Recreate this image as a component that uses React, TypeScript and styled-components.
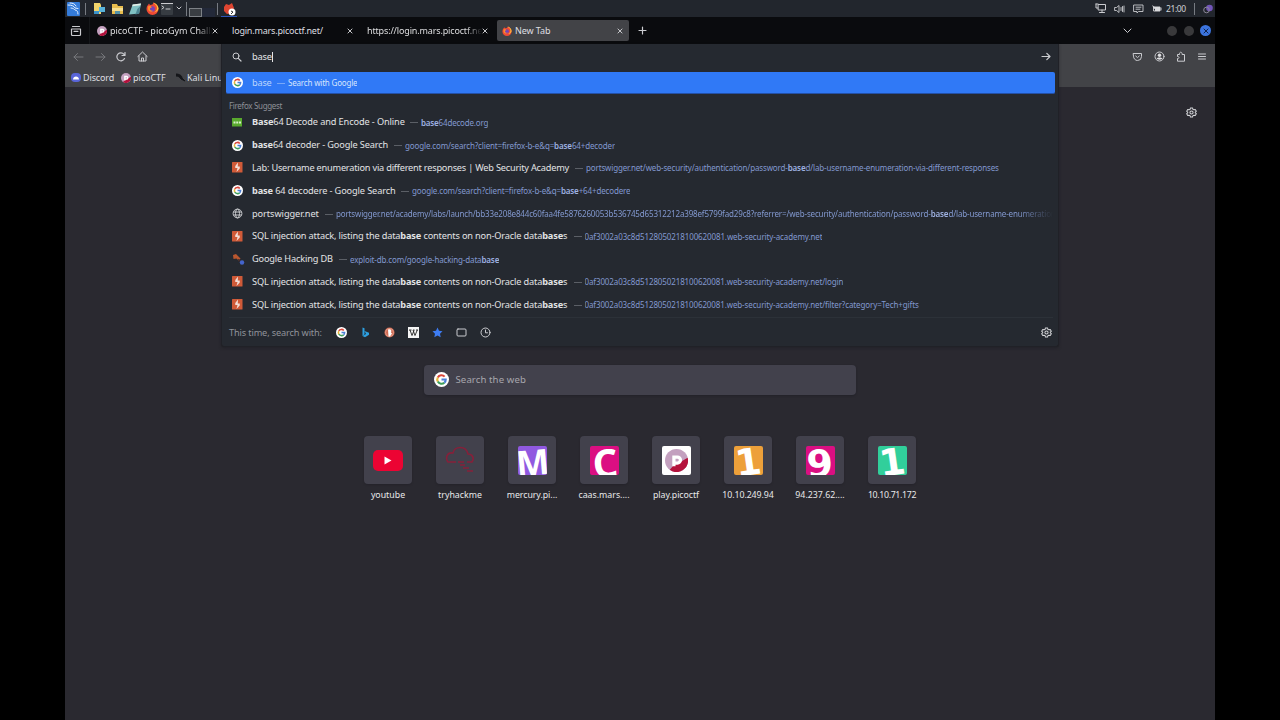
import React from "react";
import styled, { createGlobalStyle } from "styled-components";

const Global = createGlobalStyle`
  * { box-sizing: border-box; }
  body { margin: 0; background: #000; overflow: hidden; font-family: "Noto Sans", "Open Sans", sans-serif; }
  svg { display: block; flex: none; }
`;

const Stage = styled.div`
  width: 1280px;
  height: 720px;
  padding: 0 65px;
  background: #000;
`;
const Desktop = styled.div`
  position: relative;
  display: flex;
  flex-direction: column;
  width: 1150px;
  height: 720px;
  overflow: hidden;
  background: #2a2930;
`;
const Panel = styled.header`
  display: flex;
  justify-content: space-between;
  align-items: center;
  height: 17px;
  flex: none;
  background: #22262d;
`;
const Group = styled.div<{ $gap?: number; $pad?: string }>`
  display: flex;
  align-items: center;
  gap: ${(p) => p.$gap ?? 0}px;
  padding: ${(p) => p.$pad ?? "0"};
`;
const Divider = styled.i<{ $h?: number; $m?: string }>`
  width: 1px;
  height: ${(p) => p.$h ?? 12}px;
  margin: ${(p) => p.$m ?? "0"};
  background: #777b82;
`;
const MenuArrow = styled.svg`
  margin: 0 4px 0 3px;
`;
const Clock = styled.span`
  width: 20px;
  margin-right: 8px;
  color: #d0d2d5;
  font-size: 8.5px;
  line-height: 16px;
  letter-spacing: -0.4px;
  white-space: nowrap;
`;
const Workspace = styled.i<{ $active?: boolean }>`
  width: 13px;
  height: 9px;
  margin-top: 8px;
  border: 1px solid ${(p) => (p.$active ? "#7d8186" : "transparent")};
  background: ${(p) => (p.$active ? "#3a3e43" : "#232939")};
`;
const TaskButton = styled.div`
  display: flex;
  justify-content: center;
  width: 16px;
  height: 16px;
  padding-top: 2px;
  border-bottom: 1px solid #2d55b8;
`;

const TabBar = styled.nav`
  display: flex;
  align-items: center;
  height: 27px;
  flex: none;
  background: #0a0b0e;
`;
const TabViewButton = styled.div`
  display: flex;
  align-items: center;
  width: 25px;
  height: 27px;
  padding-left: 5px;
  border-right: 1px solid #15171a;
  flex: none;
`;
const Tab = styled.div<{ $active?: boolean }>`
  display: flex;
  align-items: center;
  width: 132px;
  height: 21px;
  margin-right: 3px;
  padding: 0 6px 0 5px;
  flex: none;
  border-radius: 2px;
  background: ${(p) => (p.$active ? "#424347" : "transparent")};
`;
const TabLabel = styled.span<{ $ls?: number; $fade?: boolean; $icon?: boolean }>`
  flex: 1;
  min-width: 0;
  margin-left: ${(p) => (p.$icon ? 3 : 0)}px;
  overflow: hidden;
  color: #dfdfe1;
  font-size: 9px;
  line-height: 16px;
  letter-spacing: ${(p) => p.$ls ?? 0}px;
  white-space: nowrap;
  mask-image: ${(p) => (p.$fade ? "linear-gradient(90deg, #000 86%, transparent 100%)" : "none")};
`;
const WindowControls = styled.div`
  display: flex;
  align-items: center;
  gap: 6.5px;
  margin-left: 35px;
`;
const WinDot = styled.i<{ $close?: boolean }>`
  display: flex;
  align-items: center;
  justify-content: center;
  width: ${(p) => (p.$close ? 11 : 10)}px;
  height: ${(p) => (p.$close ? 11 : 10)}px;
  border-radius: 50%;
  background: ${(p) => (p.$close ? "#3c74de" : "#39393b")};
`;

const Toolbar = styled.div`
  display: flex;
  justify-content: space-between;
  height: 43px;
  flex: none;
  background: #424347;
`;
const ToolbarLeft = styled.div`
  display: flex;
  flex-direction: column;
`;
const NavRow = styled.div`
  display: flex;
  align-items: center;
  gap: 10.7px;
  height: 25px;
  padding-left: 8px;
`;
const Bookmarks = styled.div`
  display: flex;
  align-items: center;
  height: 17px;
  padding-left: 6px;
`;
const Bookmark = styled.span<{ $w: number; $ls?: number }>`
  display: flex;
  align-items: center;
  gap: 2px;
  width: ${(p) => p.$w}px;
  color: #dedfe1;
  font-size: 9px;
  letter-spacing: ${(p) => p.$ls ?? 0}px;
  line-height: 16px;
  white-space: nowrap;
`;

const UrlPopup = styled.section`
  position: absolute;
  left: 156px;
  top: 44px;
  width: 838px;
  height: 303px;
  padding: 0 3px 0 4px;
  border: 1px solid #202127;
  border-top: 0;
  border-radius: 0 0 3px 3px;
  background: #252930;
  box-shadow: 0 1px 3px #1b1b2088;
`;
const UrlInput = styled.div`
  display: flex;
  align-items: center;
  height: 28px;
  padding: 0 4px 3px 6px;
`;
const Typed = styled.span`
  flex: 1;
  display: flex;
  align-items: center;
  margin-left: 10px;
  color: #e4e5e7;
  font-size: 9.3px;
  letter-spacing: -0.2px;
  line-height: 14px;
`;
const Caret = styled.i`
  width: 1px;
  height: 10px;
  background: #e4e5e7;
`;
const Selected = styled.div`
  display: flex;
  align-items: center;
  height: 22px;
  padding-left: 6px;
  border-radius: 2px;
  border-bottom: 1px solid #2450a5;
  background: #3079f6;
`;
const SuggestHeading = styled.div`
  height: 17px;
  padding: 5px 0 0 3px;
  color: #8d9096;
  font-size: 8px;
  line-height: 13px;
  letter-spacing: -0.33px;
`;
const Results = styled.div`
  display: flex;
  flex-direction: column;
  padding: 0 2px 0 6px;
`;
const Row = styled.div`
  display: flex;
  align-items: center;
  height: 22.8px;
  min-width: 0;
`;
const IconSlot = styled.span`
  display: flex;
  width: 11px;
  flex: none;
`;
const Title = styled.span<{ $w: number; $ls?: number; $dim?: boolean }>`
  width: ${(p) => p.$w}px;
  margin-left: 9px;
  flex: none;
  color: ${(p) => (p.$dim ? "#bdd6fc" : "#e2e3e5")};
  font-size: 9.2px;
  letter-spacing: ${(p) => p.$ls ?? 0}px;
  line-height: 16px;
  white-space: nowrap;
  b { font-weight: 700; }
`;
const Dash = styled.i<{ $bright?: boolean }>`
  width: 8px;
  height: 1px;
  margin: 1px 3px 0 6px;
  flex: none;
  background: ${(p) => (p.$bright ? "#79a8f7" : "#5b5f66")};
`;
const Url = styled.span<{ $ls?: number; $fade?: boolean; $bright?: boolean }>`
  min-width: 0;
  overflow: hidden;
  color: ${(p) => (p.$bright ? "#d5e4fd" : "#8298cf")};
  font-size: 8px;
  letter-spacing: ${(p) => p.$ls ?? 0}px;
  line-height: 15px;
  white-space: nowrap;
  mask-image: ${(p) => (p.$fade ? "linear-gradient(90deg, #000 95%, transparent 100%)" : "none")};
  b { font-weight: 600; color: #9fb2e2; }
`;
const OneOffs = styled.footer`
  display: flex;
  align-items: center;
  height: 29px;
  margin: 1px 2px 0 3px;
  padding: 1px 1px 0 0;
  border-top: 1px solid #2c3138;
  color: #90939a;
  font-size: 9.2px;
  letter-spacing: -0.14px;
  > span { width: 107px; white-space: nowrap; }
`;
const Engines = styled.div`
  display: flex;
  flex: 1;
  gap: 13px;
`;

const NewTab = styled.main`
  position: relative;
  display: flex;
  flex-direction: column;
  align-items: center;
  flex: 1;
  padding-top: 278px;
`;
const Gear = styled.div`
  position: absolute;
  right: 18px;
  top: 20px;
`;
const SearchBox = styled.div`
  display: flex;
  align-items: center;
  gap: 7px;
  width: 432px;
  height: 30px;
  padding: 0 0 1px 9.5px;
  border-radius: 4px;
  background: #42414c;
  box-shadow: 0 1px 2px #1d1c2288;
  color: #a7a6ad;
  font-size: 9.6px;
  letter-spacing: 0.1px;
`;
const TopSites = styled.div`
  display: flex;
  gap: 14px;
  margin-top: 41px;
`;
const Site = styled.div`
  display: flex;
  flex-direction: column;
  align-items: center;
  width: 58px;
`;
const SiteTile = styled.div`
  display: flex;
  align-items: center;
  justify-content: center;
  width: 48px;
  height: 48px;
  border-radius: 4px;
  background: #42414c;
  box-shadow: 0 1px 2px #1d1c2266;
`;
const Badge = styled.div<{ $bg: string }>`
  display: flex;
  align-items: center;
  justify-content: center;
  width: 29px;
  height: 29px;
  overflow: hidden;
  border-radius: 2px;
  background: ${(p) => p.$bg};
`;
const Glyph = styled.span<{ $x?: number; $y?: number; $size?: number; $rot?: number; $family?: string }>`
  color: #fff;
  font-family: ${(p) => p.$family ?? '"Noto Sans"'}, sans-serif;
  font-size: ${(p) => p.$size ?? 34}px;
  font-weight: 700;
  line-height: 29px;
  transform: translate(${(p) => p.$x ?? 0}px, ${(p) => p.$y ?? 0}px) rotate(${(p) => p.$rot ?? 0}deg);
`;
const SiteName = styled.span<{ $ls?: number }>`
  margin-top: 4px;
  color: #e8e8ea;
  font-size: 8.8px;
  letter-spacing: ${(p) => p.$ls ?? 0}px;
  line-height: 14px;
  white-space: nowrap;
`;

const line = { fill: "none", stroke: "#cbccd0", strokeWidth: 1, strokeLinecap: "round", strokeLinejoin: "round" } as const;

const Google = ({ s = 11 }: { s?: number }) => (
  <svg width={s} height={s} viewBox="0 0 22 22">
    <circle cx="11" cy="11" r="11" fill="#fff" />
    <g fill="none" strokeWidth="3.1">
      <path d="M15.6 6.8A6.2 6.2 0 0 0 5.6 8" stroke="#d9473c" />
      <path d="M5.6 8a6.2 6.2 0 0 0 0 6" stroke="#e5b53a" />
      <path d="M5.6 14a6.2 6.2 0 0 0 9.6 1.7" stroke="#3f9f5c" />
      <path d="M15.2 15.7a6.2 6.2 0 0 0 2-4.7H11" stroke="#4a7fd6" />
    </g>
  </svg>
);
const Pico = ({ s = 10 }: { s?: number }) => (
  <svg width={s} height={s} viewBox="0 0 24 24">
    <circle cx="12" cy="12" r="12" fill="#c3a0bf" />
    <path d="M23.600 9A12 12 0 0 1 5 21.700L10 16l7-3z" fill="#b4123c" />
    <path d="M9.300 18V8.500h3.700a3 3 0 0 1 0 6.200H9.300" fill="none" stroke="#fff" strokeWidth="3.400" />
  </svg>
);
const Firefox = ({ s = 13 }: { s?: number }) => (
  <svg width={s} height={s} viewBox="0 0 26 26">
    <path d="M4 6l2-3 2 3 5-1 2-4c5 2 10 7 10 13a12 12 0 0 1-24 0c0-3 1-6 3-8z" fill="#f04a35" />
    <path d="M15 1c1 3 7 5 7 11 0 5-4 9-9 9 7 0 11-3 12-8 0-6-5-10-10-12z" fill="#ffc13b" />
    <circle cx="12.500" cy="14" r="5.400" fill="#7443b8" />
    <path d="M4 9c4-2 7 0 8 2-3 0-4 1-4 3 0 3 4 4 7 3-3 4-10 3-11-3z" fill="#ff8b2d" />
  </svg>
);
const Close = ({ c = "#c5c6c9" }: { c?: string }) => (
  <svg width="6" height="6" viewBox="0 0 6 6"><path d="M.7.7l4.600 4.600M5.300.7L.7 5.300" stroke={c} strokeWidth="1" /></svg>
);
const Burp = () => (
  <svg width="11" height="11" viewBox="0 0 22 22">
    <rect width="21" height="21" rx="1" fill="#cf5a38" />
    <path d="M12 1L6.500 8v4H11L9 20l6.500-7V9h-4z" fill="#f3ddd5" />
  </svg>
);
const Globe = () => (
  <svg width="11" height="11" viewBox="0 0 22 22" fill="none" stroke="#d4d5d8" strokeWidth="1.800">
    <circle cx="11" cy="11" r="8.800" /><ellipse cx="11" cy="11" rx="4" ry="8.800" /><path d="M3 8h16M3 14h16" />
  </svg>
);
const Base64 = () => (
  <svg width="11" height="11" viewBox="0 0 22 22">
    <rect y="2" width="20" height="17" fill="#59a92e" />
    <path d="M3 9h4v4H3zM8.500 9h4v4h-4zM14 9h4v4h-4z" fill="#d8f1c9" />
  </svg>
);
const Exploit = () => (
  <svg width="13" height="12" viewBox="0 0 26 24">
    <path d="M2 4l6-2 9 9-3 5-5-5-6 1z" fill="#b9572f" /><path d="M11 12l5 1 2 3-4 2z" fill="#3d2c2c" />
    <circle cx="20" cy="19" r="4.500" fill="#4464cc" />
  </svg>
);
const GearIcon = () => (
  <svg width="11" height="11" viewBox="0 0 24 24" fill="none" stroke="#d4d5d8" strokeWidth="2.200" strokeLinejoin="round">
    <path d="M9.700 2h4.600l.7 3 2.200 1.200 3-.9 2.300 4-2.300 2.100v1.200l2.300 2.100-2.300 4-3-.9-2.200 1.200-.7 3H9.700L9 19l-2.200-1.200-3 .9-2.300-4 2.300-2.100v-1.200L1.500 9.300l2.300-4 3 .9L9 5z" />
    <circle cx="12" cy="12" r="3.500" />
  </svg>
);

const icons = { base64: <Base64 />, google: <Google />, burp: <Burp />, globe: <Globe />, exploit: <Exploit /> };
type Result = { icon: keyof typeof icons; title: string; w: number; ls: number; url: string; uls: number; fade?: boolean };
const sql = "SQL injection attack, listing the data*base* contents on non-Oracle data*base*s";
const host = "0af3002a03c8d5128050218100620081.web-security-academy.net";
const results: Result[] = [
  { icon: "base64", title: "*Base*64 Decode and Encode - Online", w: 152, ls: -0.11, url: "*base*64decode.org", uls: -0.18 },
  { icon: "google", title: "*base*64 decoder - Google Search", w: 136, ls: -0.13, url: "google.com/search?client=firefox-b-e&q=*base*64+decoder", uls: -0.14 },
  { icon: "burp", title: "Lab: Username enumeration via different responses | Web Security Academy", w: 317, ls: -0.21, url: "portswigger.net/web-security/authentication/password-*base*d/lab-username-enumeration-via-different-responses", uls: -0.143 },
  { icon: "google", title: "*base* 64 decodere - Google Search", w: 143, ls: -0.12, url: "google.com/search?client=firefox-b-e&q=*base*+64+decodere", uls: -0.145 },
  { icon: "globe", title: "portswigger.net", w: 67, ls: -0.06, url: "portswigger.net/academy/labs/launch/bb33e208e844c60faa4fe5876260053b536745d65312212a398ef5799fad29c8?referrer=/web-security/authentication/password-*base*d/lab-username-enumeration-via", uls: -0.157, fade: true },
  { icon: "burp", title: sql, w: 315.5, ls: -0.155, url: host, uls: -0.115 },
  { icon: "exploit", title: "Google Hacking DB", w: 81, ls: -0.15, url: "exploit-db.com/google-hacking-data*base*", uls: -0.15 },
  { icon: "burp", title: sql, w: 315.5, ls: -0.155, url: host + "/login", uls: -0.12 },
  { icon: "burp", title: sql, w: 315.5, ls: -0.155, url: host + "/filter?category=Tech+gifts", uls: -0.12 },
];
const emphasise = (text: string) => text.split("*").map((part, i) => (i % 2 ? <b key={i}>{part}</b> : part));

export default function App() {
  return (
    <>
      <Global />
      <Stage>
        <Desktop>
          <Panel>
            <Group $pad="0 0 0 2px">
              <svg width="13" height="14" viewBox="0 0 13 14"><rect width="13" height="14" rx="1" fill="#347bd9" /><path d="M1 3c4 0 6 1 7 3l3 .5M3 1c3 0 5 1 6 3M4 6c2 0 3 1 4 2 2 0 3 2 3 4" {...line} stroke="#e6f1ff" /></svg>
              <Divider $m="0 7px 0 5px" />
              <Group $gap={5}>
                <svg width="13" height="12" viewBox="0 0 13 12"><path d="M1 0h6l1 2v9H1z" fill="#f1d36b" /><path d="M6 4h6v5H6z" fill="#58b3db" /><path d="M1 8h5v3H1z" fill="#3c93ca" /></svg>
                <svg width="13" height="12" viewBox="0 0 13 12"><path d="M1 1h5l1 2h5v8H1z" fill="#e8bd4e" /><path d="M1 5h11v3H1z" fill="#f6df91" /><path d="M4 8h5v3H4z" fill="#5392a9" /></svg>
                <svg width="12" height="12" viewBox="0 0 13 12"><path d="M4 1l9-1-2 11-11 1z" fill="#80c1c3" /><path d="M4 1l9-1-.5 2-9 1z" fill="#e2eee8" /><path d="M9 6l3-3-1 8-4 1z" fill="#4c8694" /></svg>
                <Firefox />
              </Group>
              <Group $pad="0 0 0 2px">
                <svg width="12" height="12" viewBox="0 0 12 12"><rect width="12" height="12" rx="1" fill="#373c42" /><path d="M1 3l2 1.500L1 6M5 6h4M0 .5h12" {...line} /></svg>
              </Group>
              <MenuArrow width="6" height="5" viewBox="0 0 6 5"><path d="M1 1l2 2 2-2" {...line} /></MenuArrow>
              <Divider $h={14} $m="0 2px 0 0" />
              <Workspace $active />
              <Workspace />
              <Divider $m="0 3px 0 2px" />
              <TaskButton>
                <svg width="13" height="13" viewBox="0 0 13 13"><path d="M1 4l2-3 3 1 3-2 2 5-2 5-5 1-3-3z" fill="#de4531" /><circle cx="9" cy="9" r="3.500" fill="#fff" /><path d="M8 8l2 1-2 2" stroke="#333" fill="none" /></svg>
              </TaskButton>
            </Group>
            <Group $pad="0 2px 0 0">
              <Group $gap={7.5}>
                <svg width="12" height="11" viewBox="0 0 12 11"><path d="M3.500 1.500h7v5.500h-7zM7 7v2.500M4.500 9.500h5M1 1v4h2M1 1h2" {...line} /></svg>
                <svg width="11" height="10" viewBox="0 0 11 10"><path d="M1 3.500h1.500L5 1.500v7L2.500 6.500H1zM7 3.500v3M8.500 2.500v5M10 2v6" {...line} strokeWidth=".9" /></svg>
                <svg width="11" height="10" viewBox="0 0 11 10"><path d="M1 1h9v6.500H5.500L4 9V7.500H1zM3 3.200h5M3 5.200h4" {...line} strokeWidth=".9" /></svg>
                <svg width="11" height="10" viewBox="0 0 11 10"><path d="M3 3h6v4H3zM10 4v2" {...line} /><path d="M4 3h5v4H4zM1 1l4 3-2 1z" fill="#d9dadc" /></svg>
              </Group>
              <Group $pad="0 0 0 4px"><Clock>21:00</Clock></Group>
              <Divider $m="0 8px 0 0" />
              <svg width="10" height="10" viewBox="0 0 10 10"><circle cx="6.500" cy="4" r="3.300" fill="#7255ba" /><circle cx="3.500" cy="6" r="2.800" fill="none" stroke="#8b8798" /></svg>
            </Group>
          </Panel>

          <TabBar>
            <TabViewButton>
              <svg width="12" height="12" viewBox="0 0 12 12"><path d="M2.500 1.500h7M1.500 4h9v5.500a1 1 0 0 1-1 1h-7a1 1 0 0 1-1-1zM4 6.300h4" {...line} strokeWidth="1.200" /></svg>
            </TabViewButton>
            <Group $pad="0 0 0 2px">
              <Tab><Pico /><TabLabel $icon $fade $ls={-0.02}>picoCTF - picoGym Challenges</TabLabel><Close /></Tab>
              <Tab><TabLabel $ls={-0.19}>login.mars.picoctf.net/</TabLabel><Close /></Tab>
              <Tab><TabLabel $fade $ls={-0.15}>https://login.mars.picoctf.net/</TabLabel><Close /></Tab>
              <Tab $active><Firefox s={10} /><TabLabel $icon $ls={-0.08}>New Tab</TabLabel><Close /></Tab>
            </Group>
            <Group $pad="0 0 0 6px"><svg width="9" height="9" viewBox="0 0 9 9"><path d="M4.500 1v7M1 4.500h7" {...line} strokeWidth="1.200" /></svg></Group>
            <Group $pad="0 0 0 476px"><svg width="9" height="6" viewBox="0 0 9 6"><path d="M1 1l3.500 3.500L8 1" {...line} /></svg></Group>
            <WindowControls><WinDot /><WinDot /><WinDot $close><Close c="#10244c" /></WinDot></WindowControls>
          </TabBar>

          <Toolbar>
            <ToolbarLeft>
              <NavRow>
                <svg width="11" height="10" viewBox="0 0 11 10"><path d="M10 5H1M4.500 1.500L1 5l3.500 3.500" {...line} stroke="#77787c" /></svg>
                <svg width="11" height="10" viewBox="0 0 11 10"><path d="M1 5h9M6.500 1.500L10 5 6.500 8.500" {...line} stroke="#77787c" /></svg>
                <svg width="10" height="10" viewBox="0 0 10 10"><path d="M8.500 6.500A4 4 0 1 1 8 2.300M9 .5v3H6" {...line} strokeWidth="1.200" /></svg>
                <svg width="11" height="11" viewBox="0 0 11 11"><path d="M.8 5.500L5.500 1l4.700 4.500M2 5v5h7V5M4.500 10V7h2v3" {...line} /></svg>
              </NavRow>
              <Bookmarks>
                <Bookmark $w={50} $ls={-0.12}><svg width="10" height="9" viewBox="0 0 10 9"><rect width="10" height="9" rx="4" fill="#5965d8" /><path d="M2 6.500c0-4 6-4 6 0" fill="#fff" /></svg>Discord</Bookmark>
                <Bookmark $w={55} $ls={-0.05}><Pico />picoCTF</Bookmark>
                <Bookmark $w={60}><svg width="9" height="9" viewBox="0 0 9 9"><path d="M0 1c4 0 6 2 6 4l3 3-4-2C4 4 2 3 0 3z" fill="#15161a" stroke="#15161a" /></svg>Kali Linux</Bookmark>
              </Bookmarks>
            </ToolbarLeft>
            <Group $gap={11} $pad="0 8px 18px 0">
              <svg width="11" height="10" viewBox="0 0 11 10"><path d="M1.500 1.500h8v3a4 4 0 0 1-8 0zM3.700 4l1.800 1.600L7.300 4" {...line} /></svg>
              <svg width="11" height="11" viewBox="0 0 11 11"><circle cx="5.500" cy="5.500" r="4.500" {...line} /><circle cx="5.500" cy="4.200" r="1.700" fill="#e0e0e2" /><path d="M2.500 7.500c1-1.500 5-1.500 6 0-1 1.500-5 1.500-6 0z" fill="#e0e0e2" /></svg>
              <svg width="10" height="11" viewBox="0 0 10 11"><path d="M1.500 9.800V7.500c2 .3 2-2.300 0-2V3.500h2c-.5-3 3-3 2.600 0h2.400v6.300z" {...line} /></svg>
              <svg width="10" height="9" viewBox="0 0 10 9"><path d="M1.500 2h7M1.500 4.500h7M1.500 7h7" {...line} /></svg>
            </Group>
          </Toolbar>

          <NewTab>
            <Gear><GearIcon /></Gear>
            <SearchBox><Google s={15} />Search the web</SearchBox>
            <TopSites>
              <Site><SiteTile><svg width="30" height="21" viewBox="0 0 30 21"><rect width="30" height="21" rx="5" fill="#ec0433" /><path d="M11.500 6.500v8l7-4z" fill="#fff" /></svg></SiteTile><SiteName>youtube</SiteName></Site>
              <Site><SiteTile><svg width="32" height="30" viewBox="0 0 32 30"><path d="M23 17h5c3-4 0-8-4-8-2-9-14-8-15-1-6-1-8 5-5 9h8M16 20h5M19 23h6M23 26h6M14 17h6" fill="none" stroke="#86203a" strokeWidth="1.500" /></svg></SiteTile><SiteName>tryhackme</SiteName></Site>
              <Site><SiteTile><Badge $bg="#9059e0"><Glyph $size={35} $y={1} $rot={-5}>M</Glyph></Badge></SiteTile><SiteName $ls={-0.05}>mercury.pi...</SiteName></Site>
              <Site><SiteTile><Badge $bg="#db0f82"><Glyph $size={39} $x={1.5} $y={1.5} $rot={-5}>C</Glyph></Badge></SiteTile><SiteName>caas.mars....</SiteName></Site>
              <Site><SiteTile><Badge $bg="#fff"><Pico s={23} /></Badge></SiteTile><SiteName $ls={-0.05}>play.picoctf</SiteName></Site>
              <Site><SiteTile><Badge $bg="#eda03a"><Glyph $family='"DejaVu Sans"' $size={37} $x={0.5} $y={2} $rot={-8}>1</Glyph></Badge></SiteTile><SiteName $ls={-0.08}>10.10.249.94</SiteName></Site>
              <Site><SiteTile><Badge $bg="#db0f82"><Glyph $family='"DejaVu Sans"' $size={38} $x={-0.5} $y={4} $rot={-3}>9</Glyph></Badge></SiteTile><SiteName>94.237.62....</SiteName></Site>
              <Site><SiteTile><Badge $bg="#31cf9b"><Glyph $family='"DejaVu Sans"' $size={37} $x={0.5} $y={2} $rot={-8}>1</Glyph></Badge></SiteTile><SiteName $ls={-0.35}>10.10.71.172</SiteName></Site>
            </TopSites>
          </NewTab>

          <UrlPopup>
            <UrlInput>
              <svg width="10" height="10" viewBox="0 0 10 10"><circle cx="4" cy="4" r="3" {...line} /><path d="M6.300 6.300L9 9" {...line} strokeWidth="1.200" /></svg>
              <Typed>base<Caret /></Typed>
              <svg width="10" height="9" viewBox="0 0 10 9"><path d="M1 4.500h8M5.800 1.300L9 4.500 5.800 7.700" {...line} strokeWidth="1.200" /></svg>
            </UrlInput>
            <Selected><IconSlot><Google /></IconSlot><Title $w={19} $ls={-0.2} $dim>base</Title><Dash $bright /><Url $bright $ls={-0.18}>Search with Google</Url></Selected>
            <SuggestHeading>Firefox Suggest</SuggestHeading>
            <Results>
              {results.map((r, i) => (
                <Row key={i}>
                  <IconSlot>{icons[r.icon]}</IconSlot>
                  <Title $w={r.w} $ls={r.ls}>{emphasise(r.title)}</Title>
                  <Dash />
                  <Url $ls={r.uls} $fade={r.fade}>{emphasise(r.url)}</Url>
                </Row>
              ))}
            </Results>
            <OneOffs>
              <span>This time, search with:</span>
              <Engines>
                <Google />
                <svg width="11" height="11" viewBox="0 0 11 11"><path d="M2.500.5l2 .8v6L2.500 9zM4.500 4l4.500 1.700v2L5 10.300 2.500 9l3.500-2z" fill="#2d9fdf" /></svg>
                <svg width="11" height="11" viewBox="0 0 11 11"><circle cx="5.500" cy="5.500" r="5" fill="#cf6a52" /><path d="M4 2.500c3-1 4 1 3 3l1 1-2 3H4.500z" fill="#fff" /><circle cx="5.500" cy="5.500" r="4" fill="none" stroke="#f5c3b4" strokeWidth=".5" /></svg>
                <svg width="11" height="11" viewBox="0 0 11 11"><rect width="11" height="11" fill="#f5f5f5" /><path d="M1 3h2.500M5 3h1.500M8 3h2M2 3l2 5.500L6 3.500M5 3l2 5.500L9.300 3" fill="none" stroke="#222" strokeWidth=".9" /></svg>
                <svg width="11" height="11" viewBox="0 0 11 11"><path d="M5.500.5l1.500 3.300 3.500.4L8 6.700l.7 3.600-3.200-1.800-3.200 1.800L3 6.700.5 4.200 4 3.800z" fill="#3d7cf2" /></svg>
                <svg width="11" height="11" viewBox="0 0 11 11"><rect x="1" y="2" width="9" height="7" rx="1" {...line} /></svg>
                <svg width="11" height="11" viewBox="0 0 11 11"><circle cx="5.500" cy="5.500" r="4.500" {...line} /><path d="M5.500 3v2.800h2" {...line} /></svg>
              </Engines>
              <GearIcon />
            </OneOffs>
          </UrlPopup>
        </Desktop>
      </Stage>
    </>
  );
}
